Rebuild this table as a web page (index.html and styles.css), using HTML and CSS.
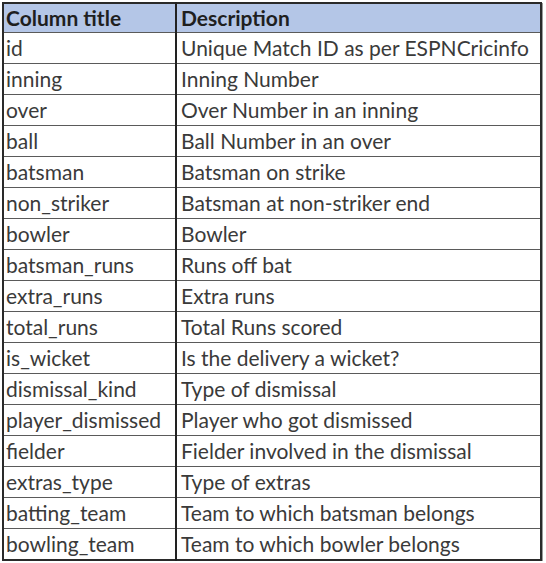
FILE: index.html
```html
<!DOCTYPE html>
<html>
<head>
<meta charset="utf-8">
<link rel="stylesheet" href="styles.css">
</head>
<body>
<table class="cols">
  <thead>
    <tr><th class="c1">Column title</th><th class="c2">Description</th></tr>
  </thead>
  <tbody>
    <tr><td>id</td><td>Unique Match ID as per ESPNCricinfo</td></tr>
    <tr><td>inning</td><td>Inning Number</td></tr>
    <tr><td>over</td><td>Over Number in an inning</td></tr>
    <tr><td>ball</td><td>Ball Number in an over</td></tr>
    <tr><td>batsman</td><td>Batsman on strike</td></tr>
    <tr><td>non_striker</td><td>Batsman at non-striker end</td></tr>
    <tr><td>bowler</td><td>Bowler</td></tr>
    <tr><td>batsman_runs</td><td>Runs off bat</td></tr>
    <tr><td>extra_runs</td><td>Extra runs</td></tr>
    <tr><td>total_runs</td><td>Total Runs scored</td></tr>
    <tr><td>is_wicket</td><td>Is the delivery a wicket?</td></tr>
    <tr><td>dismissal_kind</td><td>Type of dismissal</td></tr>
    <tr><td>player_dismissed</td><td>Player who got dismissed</td></tr>
    <tr><td>fielder</td><td>Fielder involved in the dismissal</td></tr>
    <tr><td>extras_type</td><td>Type of extras</td></tr>
    <tr><td>batting_team</td><td>Team to which batsman belongs</td></tr>
    <tr><td>bowling_team</td><td>Team to which bowler belongs</td></tr>
  </tbody>
</table>
</body>
</html>
```
FILE: styles.css
```css
html, body {
  margin: 0;
  padding: 0;
  background: #ffffff;
}
body {
  padding: 2px 0 0 2px;
  font-family: "Lato", "Open Sans", sans-serif;
  color: #3a3a3a;
}
.cols {
  border-collapse: collapse;
  width: 540px;
  table-layout: fixed;
  border: 2px solid #2a2a2a;
  box-shadow: 1px 1px 0 #9a9a9a;
}
.cols th, .cols td {
  text-align: left;
  padding: 0 0 0 2px;
  font-size: 21px;
  line-height: 24px;
  height: 30px;
  border-top: 1px solid #5a5a5a;
  border-bottom: 1px solid #5a5a5a;
  white-space: nowrap;
  overflow: hidden;
}
.cols td:first-child, .cols th:first-child {
  border-right: 2px solid #222;
}
.c1 { width: 169px; }
.cols td:last-child, .cols th:last-child {
  padding-left: 4px;
}
.cols th {
  background: #b4c6e7;
  font-weight: bold;
  color: #1f1f1f;
  height: 28px;
}
```
